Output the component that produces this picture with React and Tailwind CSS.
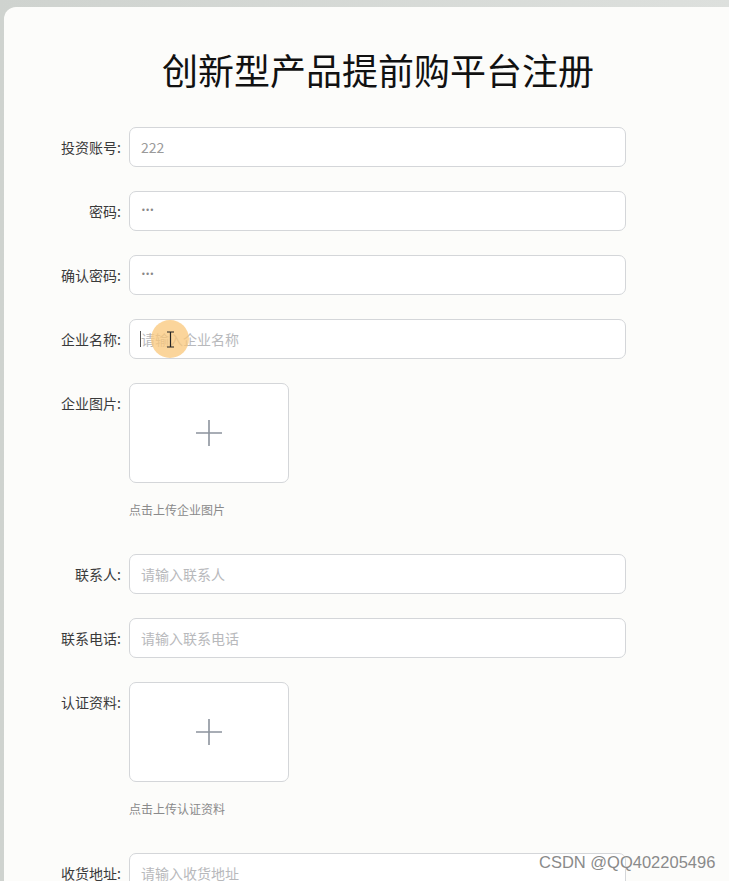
import React from 'react';

const font = { fontFamily: '"Noto Sans CJK SC", "Noto Sans", sans-serif' };

const Field = ({ label, children }) => (
  <div className="flex mb-6">
    <label className="w-[117px] text-right text-[14px] leading-[40px] text-[#3a3a3a] shrink-0">
      {label}:
    </label>
    <div className="ml-2">{children}</div>
  </div>
);

const Input = ({ value, placeholder, password }) => (
  <div className="w-[497px] h-[40px] rounded-[7px] border border-[#d4d6d9] bg-white flex items-center px-[11px] text-[14px]">
    {value ? (
      password ? (
        <span className="text-[#888] text-[8px] tracking-[-0.5px]" style={{ fontFamily: '"DejaVu Sans", sans-serif' }}>{value}</span>
      ) : (
        <span className="text-[#9a9a9a]">{value}</span>
      )
    ) : (
      <span className="text-[#b8b9bc]">{placeholder}</span>
    )}
  </div>
);

const Upload = ({ hint }) => (
  <div>
    <div className="w-[160px] h-[100px] rounded-[7px] border border-[#d4d6d9] bg-white flex items-center justify-center">
      <svg width="30" height="30" viewBox="0 0 30 30">
        <path d="M15 2v26M2 15h26" stroke="#8c939d" strokeWidth="1.6" />
      </svg>
    </div>
    <div className="pt-[17px] pb-[10px] leading-[20px] text-[12px] text-[#8a8a8a]">{hint}</div>
  </div>
);

export default function App() {
  return (
    <div className="relative w-[729px] h-[881px] overflow-hidden bg-gradient-to-r from-[#cfd3cf] to-[#dde0dd] pt-[7px] pl-[4px]" style={font}>
      <div className="h-full bg-[#fcfcfa] rounded-tl-[12px]">
        <h1 className="pt-[37px] pb-[33px] pl-[23px] text-center text-[36px] leading-[50px] text-[#111] font-normal">
          创新型产品提前购平台注册
        </h1>
        <Field label="投资账号"><Input value="222" /></Field>
        <Field label="密码"><Input value="•••" password /></Field>
        <Field label="确认密码"><Input value="•••" password /></Field>
        <Field label="企业名称">
          <div className="relative">
            <Input placeholder="请输入企业名称" />
            <div className="absolute left-[11px] top-[12px] w-px h-[16px] bg-[#555]" />
          </div>
        </Field>
        <Field label="企业图片"><Upload hint="点击上传企业图片" /></Field>
        <Field label="联系人"><Input placeholder="请输入联系人" /></Field>
        <Field label="联系电话"><Input placeholder="请输入联系电话" /></Field>
        <Field label="认证资料"><Upload hint="点击上传认证资料" /></Field>
        <Field label="收货地址"><Input placeholder="请输入收货地址" /></Field>
      </div>

      {/* mouse highlight with text cursor */}
      <div className="absolute left-[151px] top-[320px] w-[38px] h-[38px] rounded-full bg-[#f9c77a]/75" />
      <svg className="absolute left-[166px] top-[331px]" width="9" height="17" viewBox="0 0 9 17">
        <path d="M1 1h7M4.5 1v15M1 16h7" stroke="#222" strokeWidth="1.2" fill="none" />
      </svg>

      {/* watermark */}
      <div className="absolute left-[539px] top-[851px] text-[16.5px] leading-[22px] text-[#8a8a8a]" style={{ fontFamily: '"Liberation Sans", Arial, sans-serif', textShadow: '0 0 2px #fff' }}>
        CSDN @QQ402205496
      </div>
    </div>
  );
}
